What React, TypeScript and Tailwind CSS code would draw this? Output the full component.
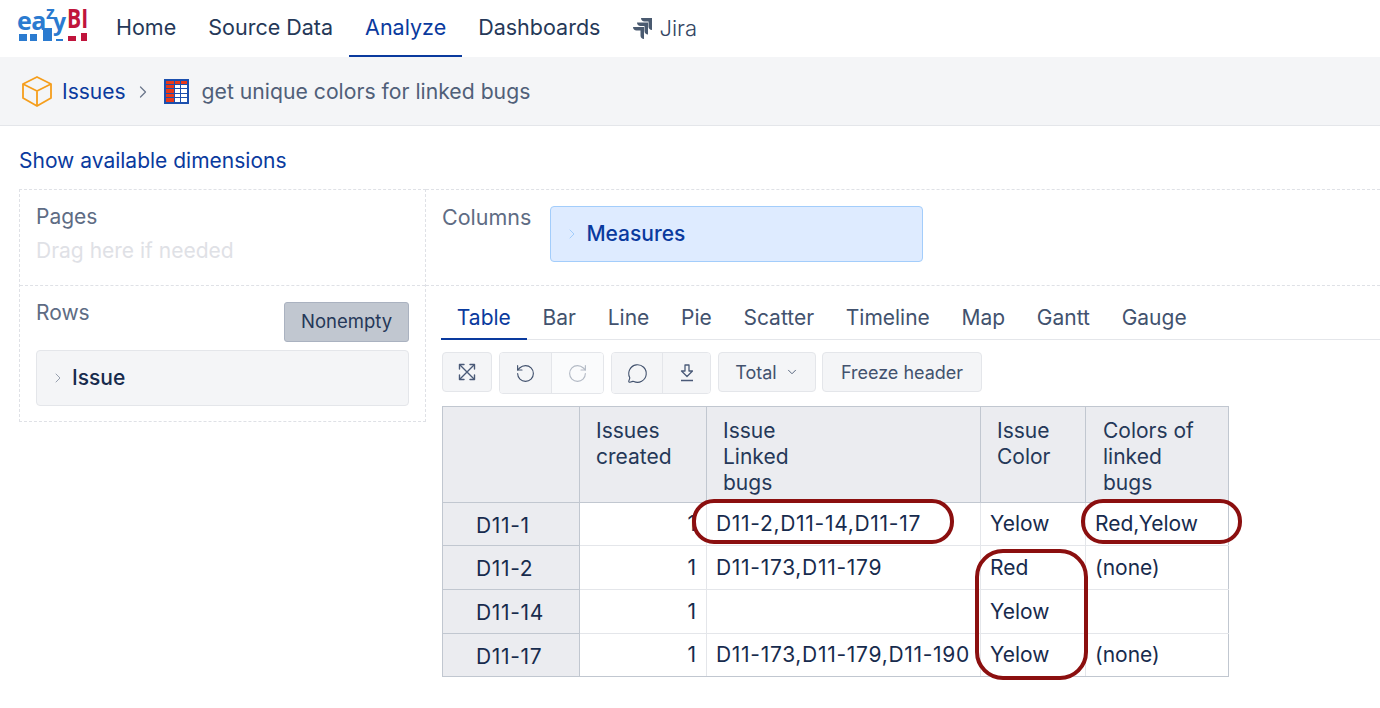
import { ChevronDown, ChevronRight, MessageCircle, RotateCcw, RotateCw } from "lucide-react";
import type { ReactNode } from "react";

const navItems = ["Home", "Source Data", "Analyze", "Dashboards"];
const tabs = ["Table", "Bar", "Line", "Pie", "Scatter", "Timeline", "Map", "Gantt", "Gauge"];

const headers = [
  ["Issues", "created"],
  ["Issue", "Linked", "bugs"],
  ["Issue", "Color"],
  ["Colors of", "linked", "bugs"],
];

const rows = [
  { key: "D11-1", created: "1", linked: "D11-2,D11-14,D11-17", color: "Yelow", colors: "Red,Yelow", height: "h-[43px]" },
  { key: "D11-2", created: "1", linked: "D11-173,D11-179", color: "Red", colors: "(none)", height: "h-[44px]" },
  { key: "D11-14", created: "1", linked: "", color: "Yelow", colors: "", height: "h-[44px]" },
  { key: "D11-17", created: "1", linked: "D11-173,D11-179,D11-190", color: "Yelow", colors: "(none)", height: "h-[43px]" },
];

function Logo() {
  return (
    <div className="relative h-[42px] w-[72px] shrink-0 font-['Open_Sans',sans-serif] font-bold leading-none">
      <span className="absolute left-0 top-0 text-[25px] tracking-[-0.5px] text-[#2b7bd0]">ea</span>
      <span className="absolute left-[29px] top-[-5px] text-[18px] text-[#2b7bd0]">z</span>
      <span className="absolute left-[36px] top-[2px] text-[23px] text-[#2b7bd0]">y</span>
      <span className="absolute left-[50px] top-[-4px] origin-left scale-x-[0.78] text-[27px] text-[#c0143c]">BI</span>
      <div className="absolute bottom-[9px] left-[2px] flex items-end">
        <div className="h-[7px] w-[8px] bg-[#2b7bd0]" />
        <div className="ml-[3px] h-[7px] w-[7px] bg-[#2b7bd0]" />
        <div className="ml-[6px] h-[13px] w-[9px] bg-[#2b7bd0]" />
        <div className="ml-[4px] h-[2px] w-[7px] bg-[#2b7bd0]" />
        <div className="ml-[5px] h-[5px] w-[8px] bg-[#c0143c]" />
        <div className="ml-[5px] h-[8px] w-[6px] bg-[#c0143c]" />
      </div>
    </div>
  );
}

function JiraIcon() {
  return (
    <svg width="21" height="23" viewBox="0 0 21 23" fill="#4a5a70">
      <path d="M9 1h11v12c-2 0-3.500-1.500-3.500-3.500V4.500H12.500C10.500 4.500 9 3 9 1z" />
      <path d="M5 5.500h11v12c-2 0-3.500-1.500-3.500-3.500V9H8.500C6.500 9 5 7.500 5 5.500z" />
      <path d="M1 10h11v12c-2 0-3.500-1.500-3.500-3.500v-5H4.500C2.500 13.500 1 12 1 10z" />
    </svg>
  );
}

function CubeIcon() {
  return (
    <svg width="32" height="32" viewBox="0 0 32 32" fill="none" stroke="#f59e1c" strokeWidth="1.8" strokeLinejoin="round">
      <path d="M16 2 30 9v14l-14 8-14-8V9z" />
      <path d="M2 9l14 7 14-7M16 16v15" />
    </svg>
  );
}

function ReportIcon() {
  return (
    <div className="grid h-[25px] w-[25px] shrink-0 grid-cols-[8px_1fr_1fr] grid-rows-5 gap-[1px] bg-[#1b4fae] p-[2px]">
      {Array.from({ length: 15 }).map((_, i) => (
        <div key={i} className={i % 3 === 0 || i < 3 ? "bg-[#e8391a]" : "bg-white"} />
      ))}
    </div>
  );
}

function ExpandIcon() {
  return (
    <svg width="20" height="20" viewBox="0 0 20 20" fill="none" stroke="#4a5a78" strokeWidth="1.4" strokeLinecap="round" strokeLinejoin="round">
      <path d="M3 3l14 14M17 3 3 17" />
      <path d="M2.500 7V2.500H7M13 2.500h4.500V7M17.500 13v4.500H13M7 17.500H2.500V13" />
    </svg>
  );
}

function DownloadIcon() {
  return (
    <svg width="18" height="20" viewBox="0 0 18 20" fill="none" stroke="#4a5a78" strokeWidth="1.3" strokeLinejoin="round">
      <path d="M7 2h4v6h3.500L9 13.500 3.500 8H7z" />
      <path d="M3 17.500h12" />
    </svg>
  );
}

function ToolButton({ children, className = "" }: { children: ReactNode; className?: string }) {
  return (
    <div className={`flex h-[40px] items-center justify-center text-[#42526e] ${className}`}>
      {children}
    </div>
  );
}

export default function App() {
  return (
    <div className="h-[708px] w-[1380px] overflow-hidden bg-white font-['Inter',sans-serif] text-[#172b4d]">
      <header className="flex h-[57px] items-center pl-[17px]">
        <Logo />
        <nav className="ml-[11px] flex h-full items-center">
          {navItems.map((item) => (
            <div
              key={item}
              className={`flex h-full items-center px-[16px] text-[21.500px] ${
                item === "Analyze" ? "border-b-2 border-[#0a3a9e] text-[#0a3a9e]" : "border-b-2 border-transparent text-[#253858]"
              }`}
            >
              {item}
            </div>
          ))}
          <div className="ml-[16px] flex items-center gap-[6px] text-[22px] font-light text-[#344563]">
            <JiraIcon />
            Jira
          </div>
        </nav>
      </header>

      <div className="flex h-[69px] items-center border-b border-[#e4e6ea] bg-[#f4f5f7] pl-[21px] text-[21px]">
        <CubeIcon />
        <span className="ml-[9px] pt-[2px] text-[#0a3a9e]">Issues</span>
        <ChevronRight size={20} strokeWidth={1.5} className="ml-[7px] mt-[2px] text-[#6b778c]" />
        <div className="ml-[11px]">
          <ReportIcon />
        </div>
        <span className="ml-[13px] pt-[2px] text-[21.200px] text-[#505f79]">get unique colors for linked bugs</span>
      </div>

      <div className="pt-[22px] pl-[19px] text-[21px] leading-[26px] text-[#0a3a9e]">Show available dimensions</div>

      <div className="ml-[19px] mt-[15px] grid grid-cols-[407px_1fr] items-start">
        <div className="border border-dashed border-[#dfe1e6]">
          <div className="h-[96px] border-b border-dashed border-[#dfe1e6] px-[16px] pt-[14px]">
            <div className="text-[21px] leading-[26px] text-[#5e6c84]">Pages</div>
            <div className="mt-[8px] text-[21px] leading-[26px] text-[#dfe1e6]">Drag here if needed</div>
          </div>
          <div className="h-[135px] px-[16px] pt-[14px]">
            <div className="flex items-start justify-between">
              <span className="text-[21px] leading-[26px] text-[#5e6c84]">Rows</span>
              <div className="mt-[2px] flex h-[40px] w-[125px] items-center justify-center rounded-[3px] border border-[#aab2c0] bg-[#c1c7d0] text-[18.500px] text-[#253858]">
                Nonempty
              </div>
            </div>
            <div className="mt-[8px] flex h-[56px] items-center rounded-[4px] border border-[#e4e6ea] bg-[#f4f5f7] pl-[13px] text-[21px] font-medium text-[#172b4d]">
              <ChevronRight size={16} strokeWidth={1.5} className="text-[#97a0af]" />
              <span className="ml-[6px]">Issue</span>
            </div>
          </div>
        </div>

        <div className="min-w-0">
          <div className="flex h-[97px] border-y border-dashed border-[#dfe1e6] pl-[16px] pt-[14px]">
            <span className="text-[21.500px] leading-[26px] text-[#5e6c84]">Columns</span>
            <div className="ml-[19px] mt-[2px] flex h-[56px] w-[373px] items-center rounded-[4px] border border-[#a3cdfb] bg-[#deebff] pl-[13px] text-[21px] font-medium text-[#0a3a9e]">
              <ChevronRight size={16} strokeWidth={1.5} className="text-[#a3cdfb]" />
              <span className="ml-[6px]">Measures</span>
            </div>
          </div>

          <div className="pl-[16px]">
            <div className="-ml-px flex h-[54px] items-end border-b border-[#e4e6ea]">
              {tabs.map((tab) => (
                <div
                  key={tab}
                  className={`-mb-px flex h-[38px] items-start border-b-2 px-[15.850px] pt-[3px] text-[21px] leading-[26px] ${
                    tab === "Table" ? "border-[#0a3a9e] text-[#0a3a9e]" : "border-transparent text-[#42526e]"
                  }`}
                >
                  {tab}
                </div>
              ))}
            </div>

            <div className="mt-[12px] flex gap-[7px] text-[18px]">
              <ToolButton className="w-[50px] rounded-[4px] border border-[#e4e6ea] bg-[#f4f5f7]">
                <ExpandIcon />
              </ToolButton>
              <div className="flex overflow-hidden rounded-[4px] border border-[#e4e6ea]">
                <ToolButton className="w-[52px] border-r border-[#e4e6ea] bg-[#f4f5f7]">
                  <RotateCcw size={21} strokeWidth={1.3} />
                </ToolButton>
                <ToolButton className="w-[51px] bg-[#fafbfc] text-[#b3bac5]">
                  <RotateCw size={21} strokeWidth={1.3} />
                </ToolButton>
              </div>
              <div className="flex overflow-hidden rounded-[4px] border border-[#e4e6ea]">
                <ToolButton className="w-[51px] border-r border-[#e4e6ea] bg-[#f4f5f7]">
                  <MessageCircle size={21} strokeWidth={1.3} />
                </ToolButton>
                <ToolButton className="w-[47px] bg-[#f4f5f7]">
                  <DownloadIcon />
                </ToolButton>
              </div>
              <ToolButton className="w-[98px] gap-[8px] rounded-[4px] border border-[#e4e6ea] bg-[#f4f5f7]">
                Total
                <ChevronDown size={14} strokeWidth={1.5} />
              </ToolButton>
              <ToolButton className="-ml-px w-[160px] rounded-[4px] border border-[#e4e6ea] bg-[#f4f5f7]">Freeze header</ToolButton>
            </div>

            <table className="mt-[12px] w-[786px] table-fixed border-collapse text-[21px] leading-[26px] text-[#172b4d]">
              <colgroup>
                <col className="w-[137px]" />
                <col className="w-[127px]" />
                <col className="w-[274px]" />
                <col className="w-[105px]" />
                <col className="w-[143px]" />
              </colgroup>
              <thead>
                <tr className="h-[96px] bg-[#ebecf0] text-[#253858]">
                  <th className="border border-[#c1c7d0] font-normal" />
                  {headers.map((lines) => (
                    <th key={lines.join(" ")} className="border border-[#c1c7d0] px-[16px] pb-[6px] pt-[11px] text-left align-top font-normal last:pl-[17px]">
                      {lines.map((line) => (
                        <div key={line}>{line}</div>
                      ))}
                    </th>
                  ))}
                </tr>
              </thead>
              <tbody>
                {rows.map((row, i) => {
                  const rowBorder = i === rows.length - 1 ? "border border-[#e4e6ea] border-b-[#c1c7d0]" : "border border-[#e4e6ea]";
                  return (
                    <tr key={row.key} className={row.height}>
                      <th className="border border-[#c1c7d0] bg-[#ebecf0] pl-[33px] pt-[3px] text-left font-normal tracking-[0.65px]">{row.key}</th>
                      <td className={`${rowBorder} pr-[10px] text-right`}>{row.created}</td>
                      <td className={`${rowBorder} whitespace-nowrap pl-[9px] tracking-[0.7px]`}>{row.linked}</td>
                      <td className={`${rowBorder} pl-[9px]`}>{row.color}</td>
                      <td className={`${rowBorder} border-r-[#c1c7d0] pl-[9px]`}>{row.colors}</td>
                    </tr>
                  );
                })}
              </tbody>
            </table>
          </div>
        </div>
      </div>

      {/* red highlight marks drawn over the table */}
      <div className="absolute left-[692px] top-[499px] h-[45px] w-[262px] rounded-[22px] border-[4px] border-[#8b0f0f]" />
      <div className="absolute left-[1081px] top-[499px] h-[45px] w-[161px] rounded-[22px] border-[4px] border-[#8b0f0f]" />
      <div className="absolute left-[975px] top-[549px] h-[131px] w-[113px] rounded-[28px] border-[4px] border-[#8b0f0f]" />
    </div>
  );
}
